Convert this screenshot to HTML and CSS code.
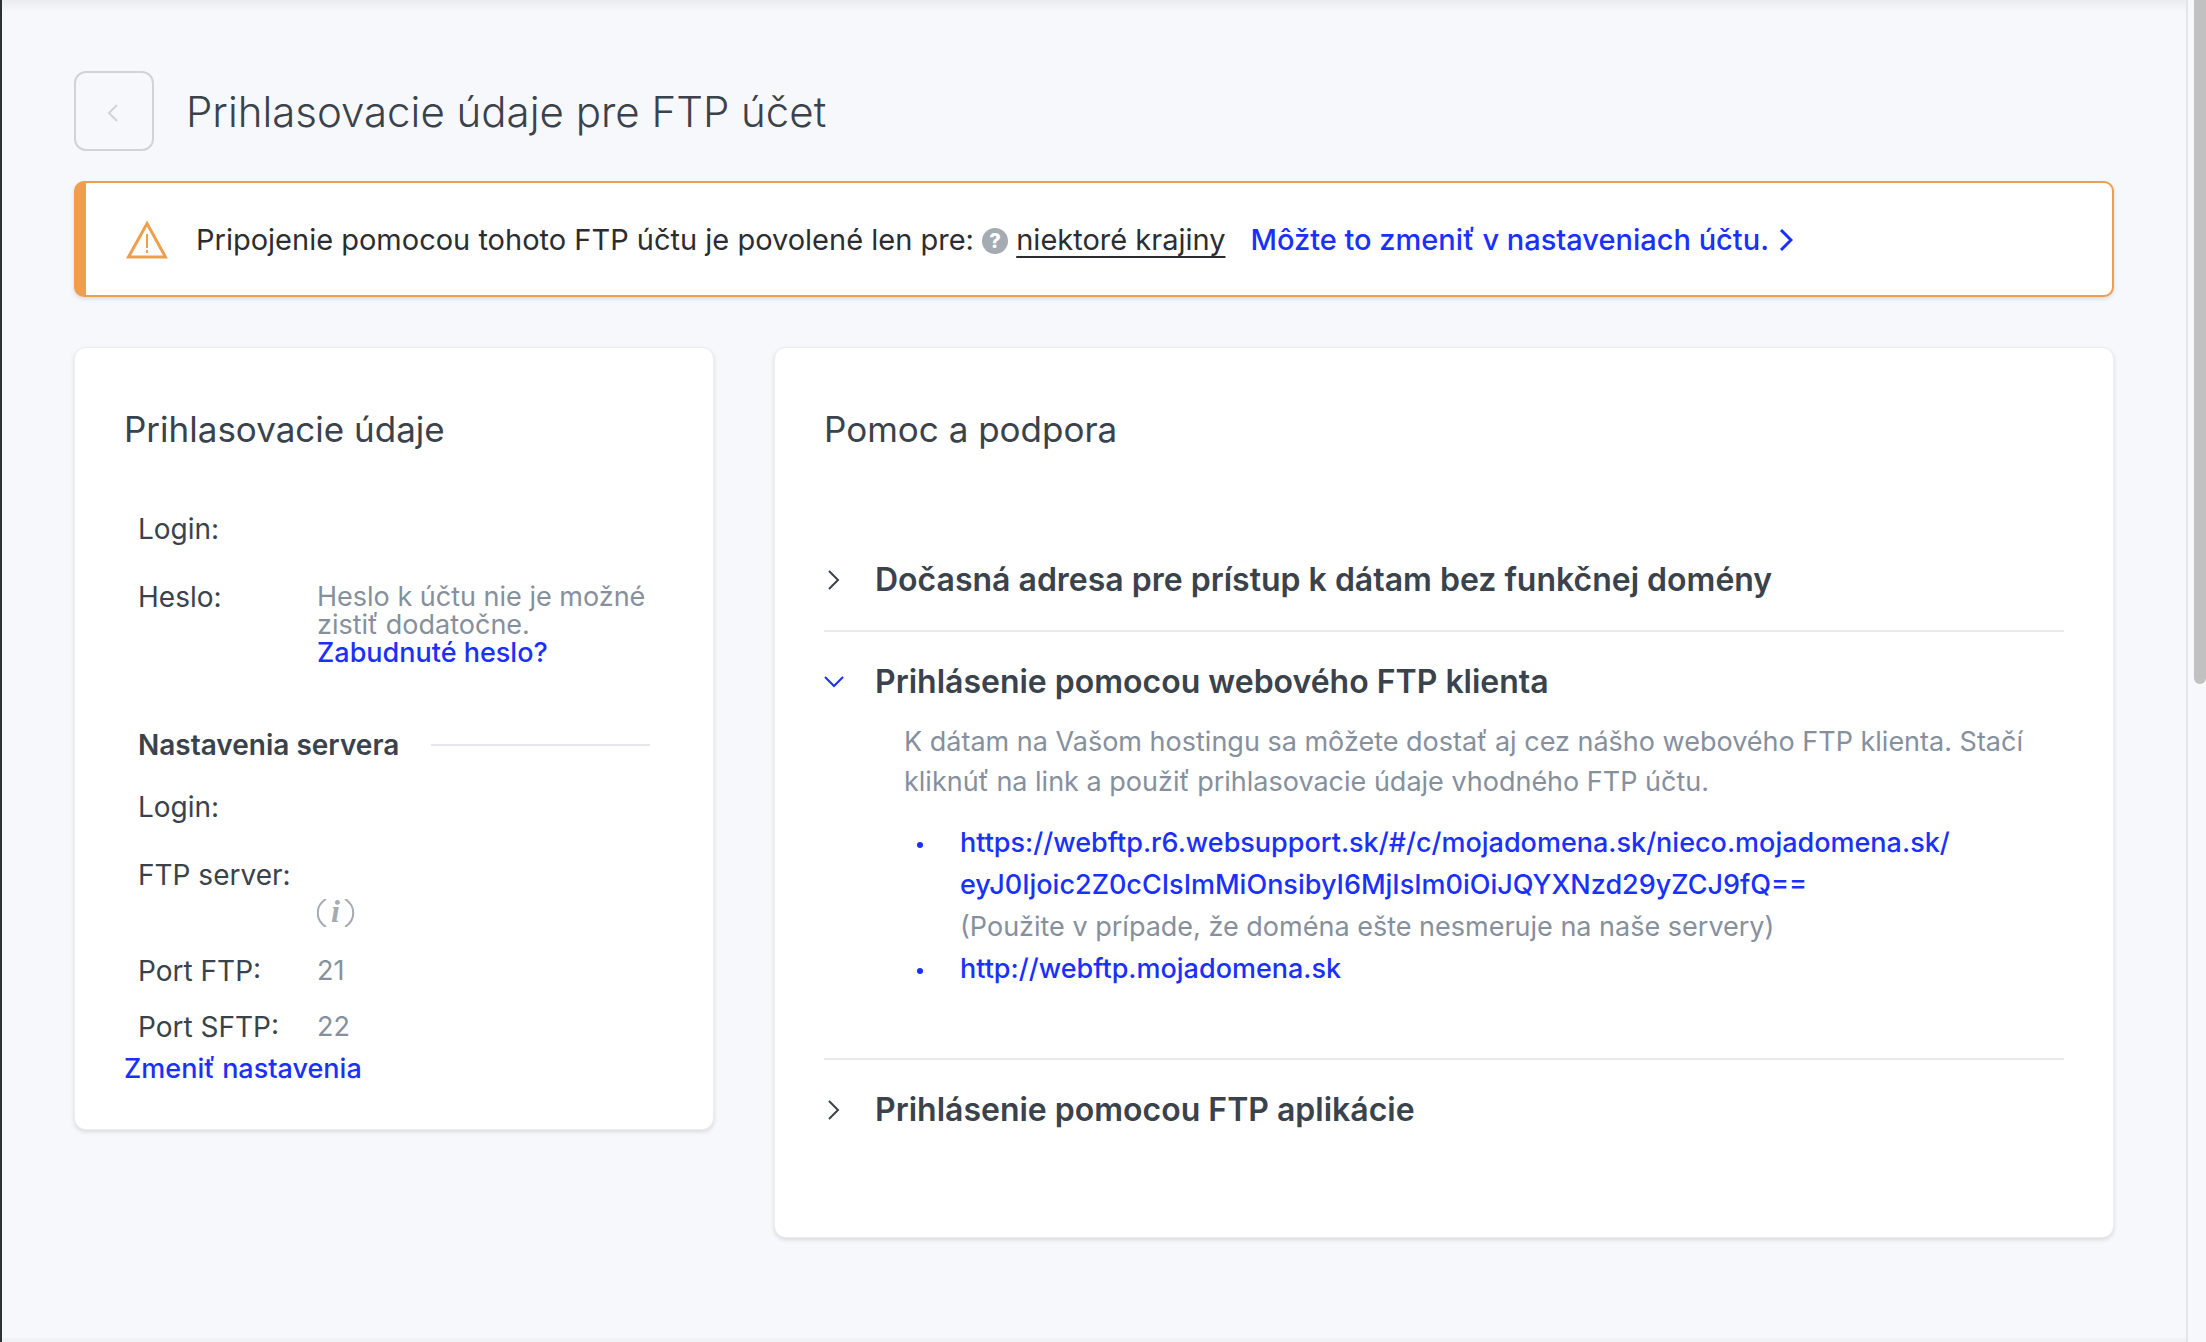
FILE: index.html
```html
<!DOCTYPE html>
<html lang="sk">
<head>
    <meta charset="utf-8">
    <title>Prihlasovacie údaje pre FTP účet</title>
    <link rel="stylesheet" href="styles.css">
</head>
<body>
    <main class="page">
        <header class="page-head">
            <button class="back" type="button" aria-label="Späť">
                <svg width="12" height="18" viewBox="0 0 12 18"><path d="M10 1 2 9l8 8"/></svg>
            </button>
            <h1>Prihlasovacie údaje pre FTP účet</h1>
        </header>

        <div class="alert">
            <svg class="alert-icon" width="42" height="40" viewBox="0 0 42 40">
                <path class="line" d="M21 3.500 39.500 37h-37z"/>
                <path class="mark" d="M21 14v14M21 30v3"/>
            </svg>
            <p class="alert-text">
                Pripojenie pomocou tohoto FTP účtu je povolené len pre:
                <span class="help">?</span>
                <span class="countries">niektoré krajiny</span>
            </p>
            <a class="alert-link" href="#">Môžte to zmeniť v nastaveniach účtu.
                <svg width="14" height="22" viewBox="0 0 14 22"><path d="M2 1l10 10L2 21"/></svg>
            </a>
        </div>

        <div class="columns">
            <section class="card">
                <h2>Prihlasovacie údaje</h2>
                <dl class="list">
                    <dt>Login:</dt>
                    <dd class="empty"></dd>
                    <dt>Heslo:</dt>
                    <dd>Heslo k účtu nie je možné zistiť dodatočne.<br><a href="#">Zabudnuté heslo?</a></dd>
                </dl>
                <h3 class="divider">Nastavenia servera</h3>
                <dl class="list">
                    <dt>Login:</dt>
                    <dd class="empty"></dd>
                    <dt>FTP server:</dt>
                    <dd class="server">
                        <svg class="info" width="38" height="28" viewBox="0 0 38 28">
                            <path d="M9 0C-2 7-2 21 9 28M28 0c11 7 11 21 0 28"/>
                            <text x="14" y="23">i</text>
                        </svg>
                    </dd>
                    <dt>Port FTP:</dt>
                    <dd>21</dd>
                    <dt>Port SFTP:</dt>
                    <dd>22</dd>
                </dl>
                <a class="change" href="#">Zmeniť nastavenia</a>
            </section>

            <section class="card help-card">
                <h2>Pomoc a podpora</h2>
                <div class="item">
                    <button class="toggle" type="button" aria-expanded="false">
                        <svg width="20" height="20" viewBox="0 0 20 20"><path d="M5 1l9 9-9 9"/></svg>
                        Dočasná adresa pre prístup k dátam bez funkčnej domény
                    </button>
                </div>
                <div class="item">
                    <button class="toggle open" type="button" aria-expanded="true">
                        <svg width="20" height="20" viewBox="0 0 20 20"><path d="M1 5l9 9 9-9"/></svg>
                        Prihlásenie pomocou webového FTP klienta
                    </button>
                    <div class="panel">
                        <p>K dátam na Vašom hostingu sa môžete dostať aj cez nášho webového FTP klienta. Stačí kliknúť na link a použiť prihlasovacie údaje vhodného FTP účtu.</p>
                        <ul>
                            <li>
                                <a href="#">https://webftp.r6.websupport.sk/#/c/mojadomena.sk/nieco.mojadomena.sk/<wbr>eyJ0Ijoic2Z0cCIsImMiOnsibyI6MjIsIm0iOiJQYXNzd29yZCJ9fQ==</a><br>
                                (Použite v prípade, že doména ešte nesmeruje na naše servery)
                            </li>
                            <li><a href="#">http://webftp.mojadomena.sk</a></li>
                        </ul>
                    </div>
                </div>
                <div class="item">
                    <button class="toggle" type="button" aria-expanded="false">
                        <svg width="20" height="20" viewBox="0 0 20 20"><path d="M5 1l9 9-9 9"/></svg>
                        Prihlásenie pomocou FTP aplikácie
                    </button>
                </div>
            </section>
        </div>
    </main>
    <div class="scrollbar"><div class="thumb"></div></div>
</body>
</html>
```
FILE: styles.css
```css
* {
    box-sizing: border-box;
}
body {
    display: flex;
    min-height: 100vh;
    margin: 0;
    border-left: 2px solid #2c3037;
    background: #f7f8fc;
    color: #3a424b;
    font-family: Inter, "Liberation Sans", sans-serif;
    font-size: 27px;
    line-height: 28px;
}
h1, h2, h3, p, ul, dl, dd {
    margin: 0;
}
a {
    color: #1a30ff;
    font-weight: 500;
    text-decoration: none;
}
svg {
    fill: none;
    stroke: currentColor;
    stroke-width: 2;
}
button {
    border: 0;
    padding: 0;
    background: none;
    color: inherit;
    font: inherit;
    cursor: pointer;
}

.page {
    flex: 1;
    padding: 71px 72px 0;
    border-bottom: 4px solid #f1f2f6;
    background: linear-gradient(#ebecf0, #f7f8fc) no-repeat 0 0 / 100% 12px;
}
.page-head {
    display: flex;
    align-items: center;
    gap: 32px;
    margin-bottom: 30px;
}
.back {
    display: flex;
    align-items: center;
    justify-content: center;
    width: 80px;
    height: 80px;
    padding: 3px 2px 0 0;
    border: 2px solid #d1d3d8;
    border-radius: 12px;
    color: #d1d3d8;
}
h1 {
    padding-top: 2px;
    font-size: 42px;
    font-weight: 300;
    line-height: 56px;
}

.alert {
    display: flex;
    align-items: center;
    min-height: 116px;
    margin-bottom: 50px;
    padding: 2px 40px 0;
    border: 2px solid #f19e4c;
    border-left-width: 12px;
    border-radius: 10px;
    background: #fff;
    box-shadow: 0 2px 4px rgba(0, 0, 0, 0.12);
    font-size: 29px;
    line-height: 40px;
}
.alert-icon {
    margin-right: 28px;
    color: #f19e4c;
}
.alert-icon .line {
    stroke-width: 3;
}
.alert-text {
    color: #2b2d31;
}
.help {
    display: inline-block;
    width: 26px;
    height: 26px;
    border-radius: 50%;
    background: #a5abb2;
    color: #fff;
    font-size: 20px;
    font-weight: 800;
    line-height: 26px;
    text-align: center;
    vertical-align: 2px;
}
.countries {
    text-decoration: underline;
    text-decoration-thickness: 2px;
    text-underline-offset: 6px;
}
.alert-link {
    display: flex;
    align-items: center;
    gap: 10px;
    margin-left: 25px;
}
.alert-link svg {
    stroke-width: 3;
}

.columns {
    display: grid;
    grid-template-columns: 640fr 1340fr;
    align-items: start;
    gap: 60px;
}
.card {
    padding: 59px 49px 46px;
    border: 1px solid #ecedf2;
    border-radius: 12px;
    background: #fff;
    box-shadow: 0 2px 4px rgba(0, 0, 0, 0.12);
}
h2 {
    margin-bottom: 50px;
    font-size: 35px;
    font-weight: 400;
    line-height: 44px;
}
.list {
    display: grid;
    grid-template-columns: 179px 1fr;
    padding-left: 14px;
}
.list dt, .list dd {
    padding: 14px 0;
}
.list dt {
    font-size: 28px;
}
.list dd {
    color: #86909c;
}
.list .empty {
    min-height: 68px;
}
.list .server {
    padding: 52px 0 16px;
}
.info {
    display: block;
    color: #a5abb2;
}
.info text {
    fill: currentColor;
    stroke: none;
    font-family: "Liberation Serif", serif;
    font-size: 32px;
    font-style: italic;
    font-weight: bold;
}
.divider {
    display: flex;
    align-items: center;
    gap: 32px;
    margin: 50px 14px 20px;
    font-size: 28px;
    font-weight: 600;
}
.divider::after {
    content: "";
    flex: 1;
    height: 2px;
    background: #e6e7ec;
}
.change {
    display: block;
}

.help-card {
    padding-bottom: 77px;
}
.help-card h2 {
    margin-bottom: 79px;
}
.item {
    padding: 26px 0;
}
.item + .item {
    border-top: 2px solid #e9eaf0;
}
.toggle {
    display: flex;
    align-items: center;
    gap: 31px;
    font-size: 32px;
    font-weight: 600;
    line-height: 48px;
    text-align: left;
}
.toggle.open svg {
    color: #1a30ff;
}
.panel {
    padding: 16px 0 42px 80px;
    color: #86909c;
    line-height: 40px;
}
.panel ul {
    margin-top: 20px;
    padding: 0;
    line-height: 42px;
    list-style: none;
}
.panel li {
    display: block;
    position: relative;
    padding-left: 56px;
}
.panel li::before {
    content: "";
    position: absolute;
    left: 13px;
    top: 20px;
    width: 6px;
    height: 6px;
    border-radius: 50%;
    background: #1a30ff;
}

.scrollbar {
    width: 20px;
    padding-left: 6px;
    border-left: 2px solid #e4e5e9;
}
.thumb {
    height: 51vh;
    border-radius: 0 0 6px 6px;
    background: #c1c1c1;
}
```
